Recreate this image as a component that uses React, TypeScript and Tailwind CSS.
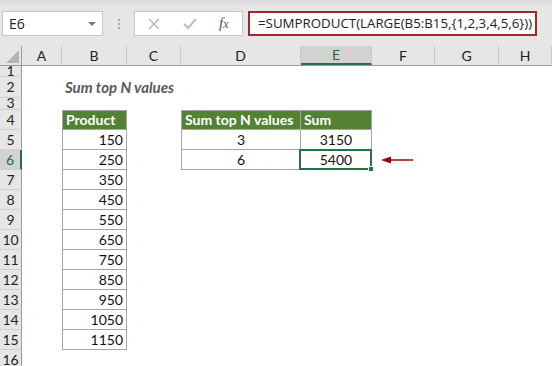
import React from 'react'

const cols = 'grid grid-cols-[22px_40px_65px_54px_120px_71px_63px_64px_1fr]'
const cellFont = { fontFamily: 'Lato, "Open Sans", sans-serif' }

const products = [150, 250, 350, 450, 550, 650, 750, 850, 950, 1050, 1150]

function RowHead({ n, active }: { n: number; active?: boolean }) {
    return (
        <div
            className={`h-full overflow-hidden flex items-center justify-center text-[14px] leading-none border-b border-[#d0d0d0] ${
                active
                    ? 'bg-[#d2d2d2] text-[#1e6b40] border-r-2 border-r-[#217346]'
                    : 'bg-[#e6e6e6] text-[#222] border-r border-r-[#9b9b9b]'
            }`}
        >
            {n}
        </div>
    )
}

export default function App() {
    const rows = products.map((p, i) => i + 5)

    return (
        <div className="w-[552px] h-[366px] overflow-hidden bg-white leading-none" style={cellFont}>
            {/* formula bar */}
            <div className="h-[46px] bg-[linear-gradient(#d8d8d8,#e6e6e6_7px)] flex items-start pt-[11px]">
                <div className="ml-[2px] w-[101px] h-[25px] bg-white border border-[#c6c6c6] flex items-center justify-between pl-[6px] pr-[6px]">
                    <span className="text-[14px] text-[#222]" style={{ fontFamily: '"Open Sans", sans-serif' }}>E6</span>
                    <span className="w-0 h-0 border-l-[4px] border-r-[4px] border-t-[4px] border-l-transparent border-r-transparent border-t-[#777]" />
                </div>
                <div className="w-[31px] h-[25px] flex flex-col items-center justify-center gap-[2px]">
                    <span className="w-[2px] h-[2px] bg-[#a8a8a8]" />
                    <span className="w-[2px] h-[2px] bg-[#a8a8a8]" />
                    <span className="w-[2px] h-[2px] bg-[#a8a8a8]" />
                </div>
                <div className="w-[109px] h-[25px] bg-white border border-[#c6c6c6] flex items-center">
                    <svg width="12" height="12" viewBox="0 0 12 12" className="ml-[13px]">
                        <path d="M1 1 L11 11 M11 1 L1 11" stroke="#bcbcbc" strokeWidth="1.6" />
                    </svg>
                    <svg width="14" height="12" viewBox="0 0 14 12" className="ml-[23px]">
                        <path d="M1 6 L5 10 L13 1" stroke="#bcbcbc" strokeWidth="2" fill="none" />
                    </svg>
                    <span className="ml-[22px] text-[15px] italic text-[#555]" style={{ fontFamily: '"Liberation Serif", serif' }}>
                        f<span className="text-[12px]">x</span>
                    </span>
                </div>
                <div className="ml-[5px] w-[289px] h-[25px] bg-white border-2 border-[#a4262c] flex items-center pl-[8px]">
                    <span className="text-[13.3px] text-[#222] whitespace-nowrap" style={{ fontFamily: '"Open Sans", sans-serif' }}>
                        =SUMPRODUCT(LARGE(B5:B15,{'{'}1,2,3,4,5,6{'}'}))
                    </span>
                </div>
            </div>

            {/* column headers */}
            <div className={`${cols} h-[20px] bg-[#e6e6e6] border-b border-[#9b9b9b] text-[14px] text-[#222]`}>
                <div className="border-r border-[#9b9b9b] flex items-end justify-end pr-[2px] pb-[2px]">
                    <svg width="13" height="13" viewBox="0 0 13 13">
                        <path d="M13 0 L13 13 L0 13 Z" fill="#b4b4b4" />
                    </svg>
                </div>
                {['A', 'B', 'C', 'D'].map((c) => (
                    <div key={c} className="border-r border-[#c9c9c9] flex items-center justify-center">{c}</div>
                ))}
                <div className="bg-[#d2d2d2] border-r border-[#c9c9c9] border-b-2 border-b-[#217346] flex items-center justify-center text-[#1e6b40]">E</div>
                {['F', 'G', 'H'].map((c) => (
                    <div key={c} className="border-r border-[#c9c9c9] flex items-center justify-center">{c}</div>
                ))}
            </div>

            {/* row 1 */}
            <div className={`${cols} h-[11px]`}>
                <div className="h-full overflow-hidden bg-[#e6e6e6] border-r border-[#9b9b9b] border-b border-b-[#d0d0d0] flex justify-center text-[14px] text-[#222]">
                    <span className="-mt-[2px]">1</span>
                </div>
            </div>
            {/* row 2 */}
            <div className={`${cols} h-[21px]`}>
                <RowHead n={2} />
                <div />
                <div className="col-span-3 flex items-center pl-[3px] text-[15px] font-bold italic text-[#595959] whitespace-nowrap">
                    Sum top N values
                </div>
            </div>
            {/* row 3 */}
            <div className={`${cols} h-[12px]`}>
                <div className="h-full overflow-hidden bg-[#e6e6e6] border-r border-[#9b9b9b] border-b border-b-[#d0d0d0] flex justify-center text-[14px] text-[#222]">
                    <span className="-mt-[2px]">3</span>
                </div>
            </div>
            {/* row 4: headers */}
            <div className={`${cols} h-[20px] text-[14px]`}>
                <RowHead n={4} />
                <div />
                <div className="bg-[#548235] border border-[#a6a6a6] text-white font-bold flex items-center pl-[3px]">Product</div>
                <div />
                <div className="bg-[#548235] border border-[#a6a6a6] text-white font-bold flex items-center pl-[3px] whitespace-nowrap">Sum top N values</div>
                <div className="bg-[#548235] border border-l-0 border-[#a6a6a6] text-white font-bold flex items-center pl-[3px]">Sum</div>
            </div>
            {rows.map((r, i) => (
                <div key={r} className={`${cols} h-[20px] text-[14px] text-[#111]`}>
                    <RowHead n={r} active={r === 6} />
                    <div />
                    <div className="border-x border-b border-[#a6a6a6] flex items-center justify-end pr-[3px]">{products[i]}</div>
                    <div />
                    {r === 5 || r === 6 ? (
                        <>
                            <div className="border-l border-r border-b border-[#a6a6a6] flex items-center justify-center">{r === 5 ? 3 : 6}</div>
                            <div className="relative border-r border-b border-[#a6a6a6] flex items-center justify-center">
                                {r === 5 ? 3150 : 5400}
                                {r === 6 && (
                                    <div className="absolute -left-[2px] -top-[1px] -right-[1px] -bottom-[1px] border-2 border-[#217346]">
                                        <span className="absolute -right-[4px] -bottom-[4px] w-[6px] h-[6px] bg-[#217346] border border-white" />
                                    </div>
                                )}
                            </div>
                            <div className="flex items-center pl-[9px]">
                                {r === 6 && (
                                    <svg width="32" height="8" viewBox="0 0 32 8">
                                        <path d="M10 4 L32 4" stroke="#a00000" strokeWidth="1.5" />
                                        <path d="M0 4 L10 0.5 L10 7.5 Z" fill="#a00000" />
                                    </svg>
                                )}
                            </div>
                        </>
                    ) : null}
                </div>
            ))}
            <div className={`${cols} h-[20px]`}>
                <RowHead n={16} />
            </div>
        </div>
    )
}
